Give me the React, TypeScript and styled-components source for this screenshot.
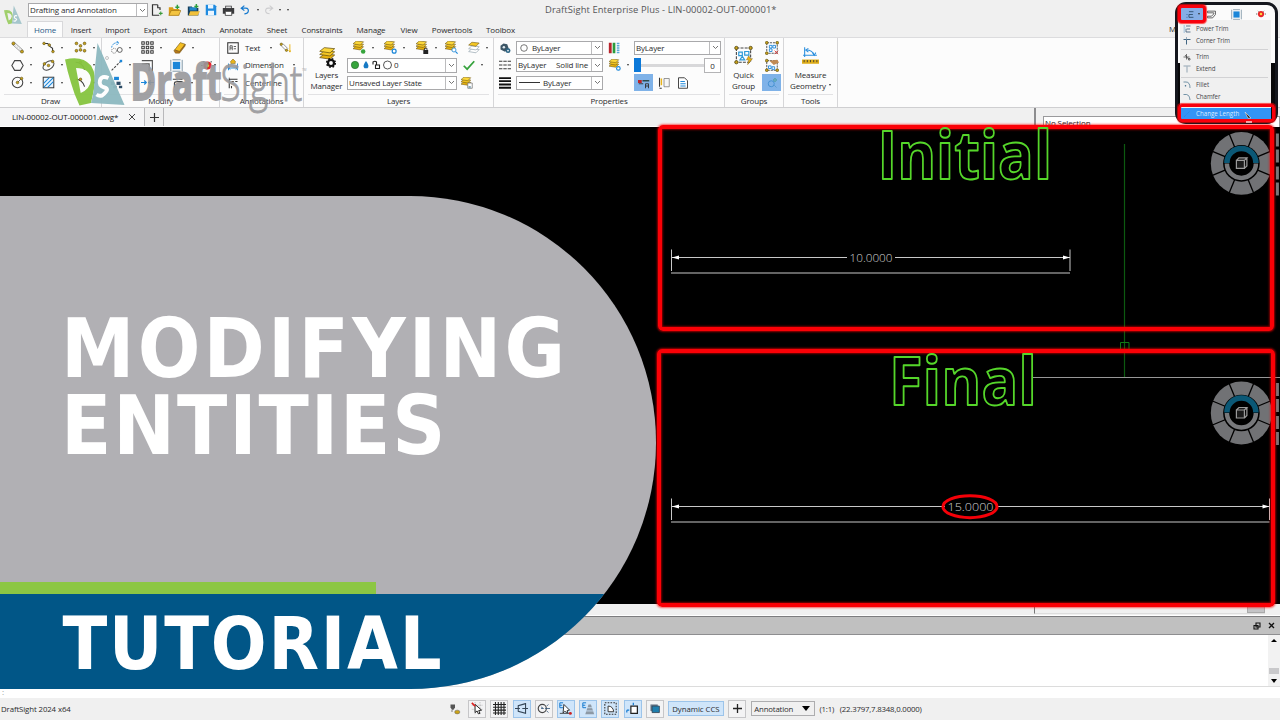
import React from "react";
import styled, { createGlobalStyle, css } from "styled-components";

const GlobalStyle = createGlobalStyle`
  * { box-sizing: border-box; }
  body { margin: 0; background: #f0f0f0; overflow: hidden; }
`;

const INK = "#2b2b2d";
const BLUE = "#1b86d8";
const GOLD = "#e8b41c";

/* ---------- shell ---------- */

const Shell = styled.div`
  position: relative;
  width: 1280px;
  height: 720px;
  overflow: hidden;
  display: flex;
  flex-direction: column;
  background: #f0f0f0;
  color: ${INK};
  font-family: "Open Sans", "Noto Sans", sans-serif;
  font-size: 8px;
  line-height: 10px;
  letter-spacing: -0.16px;
  white-space: nowrap;
`;

const TitleBar = styled.header`
  display: flex;
  align-items: center;
  height: 20px;
  flex: none;
  padding-left: 3px;
`;

const AppMark = styled.div`
  width: 25px;
  height: 20px;
  overflow: visible;
  svg { display: block; overflow: visible; }
`;

const QuickTools = styled.div`
  display: flex;
  align-items: center;
  width: 150px;
  gap: 5.3px;
  padding-left: 3px;
`;

const WindowTitle = styled.div`
  margin-left: 247px;
  color: #555558;
  font-size: 9.4px;
  letter-spacing: 0.09px;
`;

const Combo = styled.div<{ $w: number; $h?: number }>`
  display: flex;
  align-items: center;
  width: ${(p) => p.$w}px;
  height: ${(p) => p.$h ?? 14}px;
  flex: none;
  border: 1px solid #a9a9ab;
  background: #fff;
  padding-left: 1px;
`;

const ComboText = styled.span`
  flex: 1;
  display: flex;
  align-items: center;
  gap: 3px;
`;

const ComboButton = styled.span`
  width: 11px;
  align-self: stretch;
  display: flex;
  align-items: center;
  justify-content: center;
  border-left: 1px solid #bcbcbe;
`;

const Tabs = styled.nav`
  display: flex;
  height: 17px;
  flex: none;
  align-items: flex-end;
  padding-left: 27px;
`;

const Tab = styled.span<{ $w: number; $active?: boolean }>`
  width: ${(p) => p.$w}px;
  height: 16px;
  text-align: center;
  line-height: 17px;
  ${(p) =>
    p.$active &&
    css`
      background: #fcfcfc;
      border: 1px solid #d8d8da;
      border-bottom: 0;
      line-height: 15px;
      color: #2a5a86;
    `}
`;

const TabOverflow = styled.span`
  margin-left: auto;
  padding-right: 104px;
  line-height: 16px;
`;

/* ---------- ribbon ---------- */

const Ribbon = styled.section`
  display: flex;
  height: 71px;
  flex: none;
  background: #fcfcfc;
  border-top: 1px solid #dcdcde;
  border-bottom: 1px solid #cfcfd1;
`;

const Panel = styled.div<{ $w: number }>`
  width: ${(p) => p.$w}px;
  flex: none;
  display: flex;
  flex-direction: column;
  border-right: 1px solid #d6d6d8;
`;

const PanelBody = styled.div`
  flex: 1;
  display: flex;
  padding-top: 1px;
`;

const PanelName = styled.div`
  height: 13px;
  margin: 0 4px;
  border-top: 1px solid #e2e2e4;
  text-align: center;
  line-height: 12px;
`;

const Rows = styled.div<{ $w?: number }>`
  display: flex;
  flex-direction: column;
  width: ${(p) => (p.$w ? p.$w + "px" : "auto")};
`;

const Row = styled.div<{ $pad?: number }>`
  display: flex;
  align-items: center;
  height: 17.6px;
  padding-left: ${(p) => p.$pad ?? 0}px;
`;

const Cell = styled.span<{ $w: number; $center?: boolean }>`
  display: flex;
  align-items: center;
  width: ${(p) => p.$w}px;
  flex: none;
  justify-content: ${(p) => (p.$center ? "center" : "flex-start")};
`;

const Caret = styled.i<{ $gap?: number }>`
  width: 0;
  height: 0;
  flex: none;
  margin-left: ${(p) => p.$gap ?? 0}px;
  border: 1.8px solid transparent;
  border-top: 2.2px solid #333;
  border-bottom: 0;
`;

const BigTool = styled.div<{ $w: number; $pad?: number }>`
  width: ${(p) => p.$w}px;
  display: flex;
  flex-direction: column;
  align-items: center;
  padding-top: 2.5px;
  padding-left: ${(p) => p.$pad ?? 0}px;
  line-height: 11px;
`;

const BigLabel = styled.span`
  display: flex;
  align-items: center;
`;

const Pressed = styled.span<{ $w: number }>`
  width: ${(p) => p.$w}px;
  height: 17px;
  flex: none;
  display: flex;
  align-items: center;
  justify-content: center;
  background: #7fb2e8;
`;

const Slider = styled.span`
  width: 70px;
  height: 14px;
  display: flex;
  align-items: center;
  &::before { content: ""; width: 7px; height: 14px; background: #0b78d8; }
  &::after { content: ""; flex: 1; height: 3px; background: #d8d8da; }
`;

const ValueBox = styled.span`
  width: 17px;
  height: 15px;
  border: 1px solid #b4b4b6;
  background: #fff;
  text-align: center;
  line-height: 13px;
`;

const LineSample = styled.i`
  width: 21px;
  height: 1px;
  margin-left: 1px;
  background: #333;
`;

/* ---------- document strip ---------- */

const DocStrip = styled.div`
  display: flex;
  height: 19px;
  flex: none;
  border-bottom: 1px solid #fff;
`;

const DocTab = styled.div`
  width: 145px;
  display: flex;
  align-items: center;
  padding: 0 8px 1px 12px;
  justify-content: space-between;
  border-right: 1px solid #b8b8ba;
  background: #f6f6f7;
  letter-spacing: -0.1px;
  color: #111;
`;

const NewTab = styled.div`
  width: 19px;
  display: flex;
  align-items: center;
  justify-content: center;
  border-right: 1px solid #b8b8ba;
`;

const SideDock = styled.div`
  margin-left: auto;
  width: 246px;
  border-left: 2px solid #8c8c8e;
  padding: 8px 0 0 7px;
`;

const SelectionField = styled.div`
  height: 11px;
  border: 1px solid #9a9a9c;
  border-bottom: 0;
  background: #fff;
  color: #222;
  padding-left: 1px;
  line-height: 12px;
  letter-spacing: -0.1px;
`;

/* ---------- drawing area ---------- */

const Viewport = styled.main`
  position: relative;
  height: 477px;
  flex: none;
  background: #000;
`;

const Drawing = styled.svg`
  position: absolute;
  left: 640px;
  top: -7px;
  overflow: visible;
  font-family: "Open Sans", sans-serif;
  letter-spacing: 0;
`;

const Frame = styled.div<{ $x: number; $y: number; $w: number; $h: number }>`
  position: absolute;
  left: ${(p) => p.$x}px;
  top: ${(p) => p.$y}px;
  width: ${(p) => p.$w}px;
  height: ${(p) => p.$h}px;
  border: 4px solid #fb0006;
  border-radius: 5px;
  box-shadow: 0 0 2px 1px rgba(255, 0, 0, 0.6), inset 0 0 2px 1px rgba(255, 0, 0, 0.5);
`;

/* ---------- command window and status bar ---------- */

const DockEdge = styled.div`
  height: 12px;
  flex: none;
  display: flex;
  justify-content: flex-end;
  padding-right: 15px;
  border-bottom: 1px solid #fff;
`;

const DockField = styled.div`
  width: 231px;
  height: 10px;
  display: flex;
  justify-content: flex-end;
  border-left: 1px solid #777;
  border-bottom: 1px solid #ddd;
  &::after { content: ""; width: 16px; background: #c4c4c6; border: 1px solid #aaa; }
`;

const CommandBar = styled.div`
  height: 19px;
  flex: none;
  display: flex;
  align-items: center;
  justify-content: flex-end;
  gap: 7px;
  padding-right: 5px;
  background: #c0c0c0;
  border-top: 1px solid #7c7c7e;
  border-bottom: 1px solid #8e8e90;
`;

const CommandLog = styled.div`
  height: 52px;
  flex: none;
  display: flex;
  justify-content: flex-end;
  background: #fff;
  border-bottom: 1px solid #dcdcdc;
`;

const Scrollbar = styled.div`
  width: 12px;
  display: flex;
  flex-direction: column;
  align-items: center;
  background: #f2f2f2;
  padding: 4px 0 3px;
`;

const ArrowUp = styled.i`
  border: 3px solid transparent;
  border-bottom: 3.5px solid #000;
  border-top: 0;
`;

const ArrowDown = styled.i<{ $s?: number }>`
  border: ${(p) => p.$s ?? 3}px solid transparent;
  border-top: ${(p) => (p.$s ?? 3) + 1}px solid #000;
  border-bottom: 0;
`;

const Thumb = styled.i`
  width: 10px;
  height: 6px;
  margin: auto 0 5px;
  background: #c9c9cb;
`;

const CommandLine = styled.div`
  height: 11px;
  flex: none;
  background: #fff;
  padding-left: 2px;
  line-height: 9px;
  color: #999;
`;

const StatusBar = styled.footer`
  flex: 1;
  display: flex;
  align-items: center;
  padding: 0 0 1px 1px;
  font-size: 7.8px;
`;

const Product = styled.span`
  width: 445px;
  letter-spacing: -0.1px;
`;

const StatusTools = styled.div`
  display: flex;
  align-items: center;
  gap: 4.2px;
`;

const StatusButton = styled.span<{ $on?: boolean; $w?: number }>`
  width: ${(p) => p.$w ?? 18}px;
  height: 18px;
  display: flex;
  align-items: center;
  justify-content: center;
  border: 1px solid ${(p) => (p.$on ? "#9cc4ea" : "#c6c6c8")};
  background: ${(p) => (p.$on ? "#cfe5fa" : "#f3f3f4")};
`;

const StatusText = styled(StatusButton)`
  height: 15px;
  letter-spacing: -0.04px;
`;

const ScaleSelect = styled(StatusButton)`
  height: 15px;
  margin-left: 1px;
  justify-content: space-between;
  padding: 0 4px 0 2px;
  border-color: #adadaf;
  background: #f0f0f0;
`;

const Coordinates = styled.span<{ $w: number }>`
  width: ${(p) => p.$w}px;
  letter-spacing: -0.18px;
`;

/* ---------- banner ---------- */

const Banner = styled.section`
  position: absolute;
  left: 0;
  top: 196px;
  width: 656px;
  height: 493px;
  display: flex;
  flex-direction: column;
  overflow: hidden;
  border-radius: 0 246px 246px 0;
  background: #b1b0b4;
  color: #fff;
  font-family: "DejaVu Sans Condensed", "DejaVu Sans", sans-serif;
  font-stretch: condensed;
  font-weight: 700;
`;

const Headline = styled.h1`
  flex: 1;
  margin: 0;
  padding: 113.5px 0 0 61px;
  font-size: 82px;
  line-height: 77px;
  font-weight: 700;
`;

const HeadlineRow = styled.span<{ $tracking: number }>`
  display: block;
  letter-spacing: ${(p) => p.$tracking}px;
`;

const Accent = styled.div`
  width: 376px;
  height: 12px;
  background: #8cc643;
`;

const SeriesName = styled.div`
  height: 95px;
  background: #015687;
  padding-left: 62.5px;
  font-size: 73px;
  line-height: 99px;
`;

const BrandLogo = styled.svg`
  position: absolute;
  left: 60px;
  top: 38px;
  overflow: visible;
  letter-spacing: 0;
`;

/* ---------- trim menu callout ---------- */

const Callout = styled.aside`
  position: absolute;
  left: 1175px;
  top: 2px;
  width: 103px;
  height: 122px;
  border: 3px solid #14161d;
  border-radius: 11px;
  overflow: hidden;
  background: linear-gradient(#fbfbfb 58px, #08080a 58px);
  padding: 0 4px 0 2px;
  display: flex;
  flex-direction: column;
`;

const CalloutTools = styled.div`
  height: 15px;
  flex: none;
  display: flex;
  align-items: center;
  justify-content: space-between;
  padding: 3px 5px 0 27px;
`;

const Menu = styled.ul`
  margin: 0;
  padding: 3px 0 0;
  height: 98px;
  list-style: none;
  background: #f0f0f0;
  font-size: 6.2px;
  letter-spacing: -0.08px;
  color: #47474b;
`;

const MenuItem = styled.li<{ $hot?: boolean }>`
  height: 12px;
  display: flex;
  align-items: center;
  gap: 5px;
  padding-left: 3px;
  ${(p) =>
    p.$hot &&
    css`
      margin-top: 5px;
      background: #3394f5;
      color: #d9ecff;
      letter-spacing: 0;
    `}
`;

const MenuRule = styled.li`
  height: 1px;
  margin: 1.6px 3px 1.6px 1px;
  background: #d2d2d4;
`;

const RedOutline = styled.div<{ $x: number; $y: number; $w: number; $h: number }>`
  position: absolute;
  left: ${(p) => p.$x}px;
  top: ${(p) => p.$y}px;
  width: ${(p) => p.$w}px;
  height: ${(p) => p.$h}px;
  border: 3px solid #f8000c;
  border-radius: 4px;
  box-shadow: 0 0 1px 0.5px rgba(255, 0, 0, 0.7);
  display: flex;
  align-items: center;
  justify-content: center;
`;

const TrimButton = styled(RedOutline)`
  background: #86aee6;
  gap: 4px;
`;

const Pointer = styled.svg`
  position: absolute;
  left: 1244px;
  top: 111px;
`;

/* ---------- icons ---------- */

const dots = (pts: number[][], r = 1.6) =>
  pts.map(([x, y], i) => <circle key={i} cx={x} cy={y} r={r} fill="#c9a21a" stroke="#554a16" strokeWidth=".7" />);

const stack = (dx = 0, dy = 0) => (
  <g transform={`translate(${dx} ${dy})`} stroke="#6b5410" strokeWidth=".7">
    <path d="M1 10.5 5 7l9 1-4 4z" fill="#e7b10e" />
    <path d="M1 7.5 5 4l9 1-4 4z" fill="#f3c623" />
    <path d="M1 4.5 5 1l9 1-4 4z" fill="#fbd63a" />
  </g>
);

const art: Record<string, React.ReactNode> = {
  newDoc: <><path d="M9 1H2v14h9M9 1v4h3V8" fill="none" stroke="#333" strokeWidth="1.6" /><path d="M13 10v5M10.5 12.5h5" stroke="#3a9a3a" strokeWidth="1.4" /></>,
  open: <><path d="M1 14V4h5l1 2h7v8z" fill="#d99b16" /><path d="M1 14l3-6h12l-3 6z" fill="#f3c440" stroke="#86600b" strokeWidth=".6" /><path d="M9 4h5M11.5 1v5" stroke="#2f9e3c" strokeWidth="1.8" /></>,
  openBlue: <><path d="M1 14V3h5l1 2h7v9z" fill="#173f5c" /><path d="M2 14l2-5h12l-3 5z" fill="#f0c03a" /><path d="M3 4h9v4H3z" fill="#2287c9" /><path d="M9 3h5M11.5 0v5" stroke="#2f9e3c" strokeWidth="1.8" /></>,
  save: <><path d="M1 1h12l2 2v12H1z" fill="#1f8be0" /><path d="M4 1h7v5H4zM4 9h8v6H4z" fill="#eaf5ff" /></>,
  print: <><path d="M4 2h8v4H4zM1 5h14v7H1z" fill="#3a3a3c" /><path d="M4 9h8v5H4z" fill="#fff" stroke="#333" /><path d="M5 3h6v2H5z" fill="#ddd" /></>,
  undo: <path d="M7 1 2 5l5 4M2 5h7c4 0 5 3 4 6s-4 3-6 3" fill="none" stroke="#1479cf" strokeWidth="2" />,
  redo: <path d="M9 1l5 4-5 4M14 5H7C3 5 2 8 3 11s4 3 6 3" fill="none" stroke="#cdcdcf" strokeWidth="1.8" />,
  line: <><path d="M2 4.5l10 9M4.5 2l10 9" stroke="#888" strokeWidth="1" /><path d="M3 3l11 10" stroke="#bbb" strokeDasharray="2 1" />{dots([[3, 3], [13.5, 13]], 1.9)}</>,
  polyline: <><path d="M2 3h5l3 4 3 2v4" fill="none" stroke="#333" strokeWidth="1.3" />{dots([[2.5, 3], [9, 5], [13.5, 13]])}</>,
  points: dots([[3, 3], [8, 6], [13, 3], [3, 12], [8, 11], [13, 12]], 1.7),
  hex: <path d="M4.5 2h7L15 8l-3.5 6h-7L1 8z" fill="none" stroke="#444" strokeWidth="1.3" />,
  ellipse: <><ellipse cx="8" cy="8" rx="7.5" ry="4.8" transform="rotate(-35 8 8)" fill="none" stroke="#444" strokeWidth="1.2" />{dots([[8, 8], [13, 3], [3, 6]])}</>,
  arc: <><path d="M2 4q8 0 11 9" fill="none" stroke="#333" strokeWidth="1.4" />{dots([[8, 4]])}</>,
  circle: <><circle cx="8" cy="8" r="6.5" fill="none" stroke="#444" strokeWidth="1.3" /><path d="M8 8l5-5" stroke="#444" />{dots([[8, 8], [13, 3]])}</>,
  hatch: <><rect x="1.5" y="1.5" width="13" height="13" fill="#eaf5ff" stroke="#333" strokeWidth="1.2" /><path d="M2 9l7-7M2 14L14 2M7 14l7-7" stroke={BLUE} strokeWidth="1.3" /></>,
  rotate: <><path d="M2 8q1-6 8-6M8 0l3 2-3 3" fill="none" stroke={BLUE} strokeWidth="1.2" strokeDasharray="2 1" /><circle cx="5" cy="12" r="3" fill="none" stroke="#666" strokeDasharray="1.5 1" /><circle cx="12" cy="11" r="3" fill="none" stroke="#444" /></>,
  pattern: <g fill="none" stroke="#333" strokeWidth="1.2">{[1, 6.5, 12].map((y) => [1, 6.5, 12].map((x) => <rect key={`${x}-${y}`} x={x} y={y} width="3" height="3" />))}</g>,
  erase: <><path d="M2 11l7-9 6 2-7 9z" fill="#f5bf22" stroke="#7a5a08" strokeWidth=".8" /><path d="M1 12l1-1 6 2 7-9v2l-7 9H3z" fill="#b97a1c" stroke="#5c430a" strokeWidth=".5" /></>,
  extend: <><path d="M2 14L14 2" stroke="#444" strokeDasharray="3 1.5" strokeWidth="1.3" /><path d="M12 1h3v3h-3z" fill={BLUE} /></>,
  offset: <path d="M1 2h13v13M1 6h9v9" fill="none" stroke="#555" strokeWidth="1.4" />,
  stretch: <><rect x="3.5" y="3.5" width="9" height="9" fill={BLUE} /><path d="M3 1h10M3 15h10M1 1v14M15 1v14" stroke="#7d95a6" strokeWidth="1.2" /></>,
  explode: <><circle cx="8" cy="8" r="5" fill="#e8262a" /><path d="M0 8h2M14 8h2M4 4l-1-1M12 4l1-1" stroke="#555" strokeWidth="1.4" /><circle cx="8" cy="8" r="2" fill="#ffd23e" /></>,
  array: <g fill="#2c4c66"><rect x="5" y="1" width="6" height="4" fill={BLUE} /><rect x="1" y="7" width="4" height="4" /><rect x="8" y="7" width="5" height="4" /><rect x="4" y="12" width="4" height="3" /><rect x="11" y="12" width="4" height="3" /></g>,
  split: <path d="M0 8h6M4 5.5L6.5 8 4 10.5M16 8h-6M12 5.5L9.5 8l2.5 2.5" fill="none" stroke={BLUE} strokeWidth="1.5" />,
  chamfer: <path d="M1 4h12M3 14V9q0-2 4-2h6" fill="none" stroke="#444" strokeWidth="1.4" />,
  note: <><rect x="1" y="1" width="14" height="14" fill="none" stroke="#333" strokeWidth="1.4" /><path d="M4 11V5h3v6M4 8h3M9 6h3M9 9h3" stroke="#333" fill="none" /></>,
  leader: <><path d="M2 4l8 8M5 2l7 7" stroke="#777" /><path d="M14.5 3v10M13 11l1.5 2.5L16 11" stroke={GOLD} fill="none" strokeWidth="1.3" />{dots([[3, 3], [10, 11]])}</>,
  dimension: <><path d="M2 6v9M14 6v9M2 12h12M4.5 10L2 12l2.5 2M11.5 10l2.5 2-2.5 2" fill="none" stroke={BLUE} strokeWidth="1.2" /><path d="M5 6V3l3-3 3 3v3z" fill={GOLD} stroke="#6b5410" strokeWidth=".6" /></>,
  centerline: <path d="M3 15V3h11M6 15v-3M6 6h3M11 6h3M3 1v1" fill="none" stroke="#333" strokeWidth="1.4" />,
  layers: stack(0.5, 1.5),
  layerGreen: <>{stack(-1, -1)}<circle cx="12.5" cy="13" r="2.8" fill="#36a43c" /></>,
  layerRing: <>{stack(-1, -1)}<circle cx="12.5" cy="12.5" r="2.4" fill="#fff" stroke={BLUE} strokeWidth="1.5" /></>,
  layerLock: <>{stack(-1, -1)}<path d="M9 11h6v5H9z" fill="#222" /><path d="M10.5 11V9h3v2" fill="none" stroke="#222" /></>,
  layerFind: <>{stack(-1, -1)}<circle cx="11" cy="11" r="2.5" fill="#fff" stroke={BLUE} /><path d="M13 13l2.5 2.5" stroke={BLUE} strokeWidth="1.4" /></>,
  layerPage: <>{stack(-1, -1)}<path d="M9 8h6v7H9z" fill="#fff" stroke="#777" /><path d="M10 12h3v3h-3z" fill="#8ab" /></>,
  layerGhost: <><g stroke="#9aa9b2" strokeWidth=".9" fill="#fff"><path d="M2 13l4-3.5 9 1L11 14.5z" /><path d="M2 9.5L6 6l9 1-4 4z" /></g><path d="M2 5l4-3.5 9 1L11 6.5z" fill="#f3c623" stroke="#6b5410" strokeWidth=".7" /></>,
  check: <path d="M1 9l4.5 4.5L15 3" fill="none" stroke="#35a23c" strokeWidth="2.3" />,
  gears: <g fill="#3d5666"><path d="M6 2l5 1 2 6-5 4-6-3 0-5z" /><circle cx="6.5" cy="7" r="1.7" fill="#dde8ee" /><circle cx="12" cy="11.5" r="3.3" fill="#2e6686" /><circle cx="12" cy="11.5" r="1.1" fill="#fff" /></g>,
  linetypes: <path d="M0 3h16M0 8h16M0 13h16" stroke="#333" strokeWidth="1.3" strokeDasharray="4.5 1.3" />,
  weights: <path d="M0 1.5h16M0 5.5h16M0 10h16M0 14.3h16" stroke="#111" strokeWidth="2.5" />,
  bars: <><path d="M3 1v14" stroke="#b8242c" strokeWidth="3.8" /><path d="M8 1v14" stroke="#2c9b3c" strokeWidth="3.6" /><path d="M13.5 1v14" stroke="#58a9d8" strokeWidth="3.5" strokeDasharray="2 1" /></>,
  match: <><path d="M0 4h5v4H0z" fill="#b8242c" /><path d="M6 4h9v2H6z" fill="#2c4a4c" /><path d="M1 9h6M10 15V9h4v6M10 12h4" fill="none" stroke="#333" strokeWidth="1.2" /></>,
  brush: <><path d="M2 1v12M2 15h3" stroke="#333" strokeWidth="1.4" /><path d="M4.5 2v9" stroke={GOLD} strokeWidth="2" /><path d="M8 2h7v11H8z" fill="#f6f6f6" stroke="#777" /></>,
  sheet: <><path d="M2 1h8l4 4v10H2z" fill="#fff" stroke="#333" strokeWidth="1.2" /><path d="M4.5 6h6M4.5 9h7M4.5 12h7" stroke={BLUE} strokeWidth="1.3" /></>,
  group: <><path d="M2 2h12v12H2z" fill="none" stroke="#444" strokeDasharray="2.5 1" strokeWidth=".9" />{dots([[2, 2], [14, 2], [2, 14]], 1.4)}<path d="M4 5.5h3v3H4zM9 5h3.5v3H9z" fill="none" stroke="#2f9bd8" /><path d="M5 12l2-3 2 3z" fill="none" stroke="#2f9bd8" /><path d="M12.5 8.5L10.5 12h2l-1 4 4-5h-2z" fill="#f0b70f" stroke="#7a5a08" strokeWidth=".4" /></>,
  ungroup: <><path d="M2 2h12v12H2z" fill="none" stroke="#444" strokeDasharray="2.5 1" />{dots([[2, 2], [14, 2], [2, 14]])}<path d="M5 5h3v3H5zM9 5h3v3H9zM5 9h3v3H5z" fill="none" stroke={BLUE} /><path d="M11 11l4 4M15 11l-4 4" stroke="#d33" /></>,
  groupEdit: <><path d="M2 3h12v11H2z" fill="none" stroke="#444" strokeDasharray="2.5 1" />{dots([[2, 3], [2, 14], [14, 14]])}<path d="M4 9h3v3H4zM8 10h3v3H8z" fill="none" stroke={BLUE} /><path d="M5 3l9-1 2 3-6 3z" fill="#c08a54" /></>,
  sparkle: <><circle cx="7" cy="9" r="4" fill="none" stroke="#3f8fd0" strokeWidth="1.2" /><circle cx="12" cy="4" r="1.8" fill="none" stroke="#3f9a8d" /><path d="M11 11l3 3" stroke="#4f93c8" /></>,
  measure: <><path d="M2.5 0v9M1 7.5h13M4 2.5q6 0 7.5 5" fill="none" stroke="#2b8fdd" strokeWidth="1" /><path d="M6 1L3.5 2.5 6 4.5M10 5l1.5 2.5L13 5" fill="none" stroke="#2b8fdd" /><path d="M0 11.5h16v4H0z" fill="#dfae1a" /><path d="M2 12v2M5 12v2M8 12v2M11 12v2M14 12v2" stroke="#333" strokeWidth=".8" /></>,
  plug: <><path d="M2 2h6v4L6 9H4L2 6z" fill="#555" /><path d="M4 9v3" stroke="#555" /><ellipse cx="11" cy="12" rx="3.5" ry="2.5" fill="#c9a21a" stroke="#555" strokeWidth=".6" /></>,
  snap: <><path d="M1 4h14M1 9h14M5 0v15M11 0v15" stroke="#aaa" strokeDasharray="1 1" /><path d="M5 3l8 7-3.5.5L11 14l-2 .5L7.5 11 5 13z" fill="#fff" stroke="#222" strokeWidth="1.2" /><path d="M1 1l4 4" stroke="#d22" strokeWidth="2" /></>,
  grid: <path d="M3 0v16M6.5 0v16M10 0v16M13.5 0v16M0 3h16M0 6.5h16M0 10h16M0 13.5h16" stroke="#222" strokeWidth="1.3" />,
  ortho: <path d="M13 2L4 4.5v7L13 14zM0 8h6M9 8h7" fill="none" stroke="#345" strokeWidth="1.3" />,
  polar: <><circle cx="6.5" cy="8" r="5" fill="none" stroke="#444" strokeWidth="1.4" /><path d="M5 6l3 2H5M10 8h6M12 5l2-2M12 11l2 2" stroke="#357" fill="none" /></>,
  esnap: <><path d="M1 1v6M1 1h4M1 4h3M1 7h4" stroke="#1479cf" strokeWidth="1.2" fill="none" /><path d="M6 3l7 7-3 .5 1 3-4-2-2 2z" fill="#fff" stroke="#333" strokeWidth="1.2" /><path d="M1 14h13" stroke="#333" /><circle cx="14" cy="14" r="1.8" fill="#c22" /></>,
  etrack: <><path d="M1 1v6M1 1h4M1 4h3M1 7h4" stroke="#1479cf" strokeWidth="1.2" fill="none" /><path d="M8 3h3l4 12H4z" fill="#8d99a5" /><path d="M6 7h7M5 11h9" stroke="#cfe5fa" /></>,
  entities: <><rect x="1" y="1" width="14" height="14" fill="none" stroke="#333" strokeDasharray="2 1.5" strokeWidth="1.3" /><path d="M5 12V5q6 0 7 7z" fill="#fff" stroke="#333" strokeWidth="1.2" /></>,
  square: <><path d="M6 5h8v9H6z" fill="#fff" stroke="#222" strokeWidth="1.5" /><path d="M9 1v3M1 10h3M1 10v3" stroke="#1479cf" strokeWidth="1.5" /></>,
  cubes: <><path d="M3 3h9v8H3z" fill="#678" /><path d="M5 5h9v8H5z" fill="#1f7fae" stroke="#345" /></>,
  trim: <><path d="M7 3h8M7 8h7M7 13h8M7 8v5" fill="none" stroke="#2e4f6e" strokeWidth="1.6" /><path d="M2 8h3M2 13h3" stroke="#4a78b4" strokeWidth="1.3" /></>,
  trimMenu: <><path d="M6 2h9M7 8h7M6 14h9M6 8v6" fill="none" stroke="#2e4f6e" strokeWidth="1.5" /><path d="M1 2h3M1 6h4M1 10h3M1 14h3" stroke="#4a8fc4" strokeWidth="1.3" /></>,
  corner: <path d="M1 5h5M7 15V5h8M7 1v2" fill="none" stroke="#2c5575" strokeWidth="1.8" />,
  trimCross: <path d="M1 8h12M7 2v11M4 4l7 8M11 11h3v3h-3z" fill="none" stroke="#444" strokeWidth="1.5" />,
  extendT: <path d="M1 2h14M8 3v12" fill="none" stroke="#6a8598" strokeWidth="1.4" />,
  fillet: <path d="M1 2h5q8 0 8 12M5 8v3M3.5 9.5h3" fill="none" stroke="#3c6a86" strokeWidth="1.4" />,
  chamferSmall: <path d="M1 3h6q6 1 7 11" fill="none" stroke="#3c6a86" strokeWidth="1.4" />,
  lengthen: <path d="M2 14L14 2" stroke="#2a7ad4" strokeWidth="1.2" strokeDasharray="2 2" />,
  fold: <path d="M1 2h14v6l-5 6H1v-3h7l4-4V5H1z" fill="none" stroke="#333" strokeWidth="1.3" />,
};

const Icon = ({ name, size = 12 }: { name: string; size?: number }) => (
  <svg width={size} height={size} viewBox="0 0 16 16">
    {art[name]}
  </svg>
);

const Chevron = () => (
  <svg width="7" height="5" viewBox="0 0 7 5">
    <path d="M1 1l2.5 2.5L6 1" fill="none" stroke="#666" strokeWidth=".9" />
  </svg>
);

const Select = ({ w, h, children }: { w: number; h?: number; children: React.ReactNode }) => (
  <Combo $w={w} $h={h}>
    <ComboText>{children}</ComboText>
    <ComboButton><Chevron /></ComboButton>
  </Combo>
);

const Tool = ({ name, w = 31.3, caret = true, gap = 6 }: { name: string; w?: number; caret?: boolean; gap?: number }) => (
  <Cell $w={w}>
    <Icon name={name} size={13} />
    {caret && <Caret $gap={gap} />}
  </Cell>
);

/* ---------- ribbon panels ---------- */

const DrawPanel = () => (
  <Panel $w={102}>
    <PanelBody>
      <Rows>
        {[["line", "polyline", "points"], ["hex", "ellipse", "arc"], ["circle", "hatch", "arc"]].map((r, i) => (
          <Row key={i} $pad={11}>{r.map((n, j) => <Tool key={j} name={n} w={j === 2 ? 24 : 31.3} />)}</Row>
        ))}
      </Rows>
    </PanelBody>
    <PanelName>Draw</PanelName>
  </Panel>
);

const ModifyPanel = () => (
  <Panel $w={118}>
    <PanelBody>
      <Rows>
        <Row $pad={8}><Tool name="rotate" /><Tool name="pattern" /><Tool name="erase" /></Row>
        <Row $pad={8}><Tool name="extend" /><Tool name="offset" w={29} caret={false} /><Tool name="stretch" w={31} caret={false} /><Tool name="explode" w={18} gap={0} /></Row>
        <Row $pad={8}><Tool name="array" /><Tool name="split" w={31} caret={false} /><Tool name="chamfer" /></Row>
      </Rows>
    </PanelBody>
    <PanelName>Modify</PanelName>
  </Panel>
);

const AnnotationsPanel = () => (
  <Panel $w={84}>
    <PanelBody>
      <Rows>
        <Row $pad={7}><Cell $w={18}><Icon name="note" /></Cell><Cell $w={25}>Text</Cell><Caret /><Cell $w={25} $center><Icon name="leader" /></Cell></Row>
        <Row $pad={7}><Cell $w={18}><Icon name="dimension" /></Cell><Cell $w={48}>Dimension</Cell><Caret /></Row>
        <Row $pad={7}><Cell $w={18}><Icon name="centerline" /></Cell>Centerline</Row>
      </Rows>
    </PanelBody>
    <PanelName>Annotations</PanelName>
  </Panel>
);

const LayersPanel = () => (
  <Panel $w={190}>
    <PanelBody>
      <BigTool $w={43} $pad={2}>
        <svg width="18" height="27" viewBox="0 0 18 27">
          <g transform="translate(0 3) scale(1.15 1.05)">{art.layers}</g>
          <circle cx="13" cy="21" r="3" fill="none" stroke="#111" strokeWidth="2.2" />
          <circle cx="13" cy="21" r="4.3" fill="none" stroke="#111" strokeWidth="1.6" strokeDasharray="1.7 1.7" />
        </svg>
        <BigLabel>Layers</BigLabel>
        <BigLabel>Manager</BigLabel>
      </BigTool>
      <Rows>
        <Row $pad={6}>
          <Tool name="layerGreen" /><Tool name="layerRing" /><Tool name="layerLock" w={29} />
          <Tool name="layerFind" w={22} caret={false} /><Tool name="layerGhost" w={24} />
        </Row>
        <Row>
          <Select w={110} h={15}>
            <svg width="46" height="10" viewBox="0 0 46 10">
              <circle cx="6" cy="5" r="3.7" fill="#36a43c" stroke="#27652b" strokeWidth=".6" />
              <path d="M17 1q4 5 1.5 7.3h-3Q13 6 17 1z" fill="#1679c4" />
              <path d="M26.500 5h4v3.500h-4zM24 4.500V2q2-1.500 3.500 0v3" fill="none" stroke="#222" strokeWidth="1.1" />
              <circle cx="38.5" cy="5" r="4" fill="#fff" stroke="#444" strokeWidth=".9" />
            </svg>
            <LayerName>0</LayerName>
          </Select>
          <Cell $w={24} $center><Icon name="check" /></Cell><Caret />
        </Row>
        <Row>
          <Select w={110}>Unsaved Layer State</Select>
          <Cell $w={20} $center><Icon name="layerPage" /></Cell>
        </Row>
      </Rows>
    </PanelBody>
    <PanelName>Layers</PanelName>
  </Panel>
);

const LayerName = styled.span`
  margin-left: -4px;
`;

const PropertiesPanel = () => (
  <Panel $w={231}>
    <PanelBody>
      <Rows $w={140}>
        <Row $pad={5}>
          <Cell $w={17}><Icon name="gears" /></Cell>
          <Select w={87}>
            <svg width="11" height="8" viewBox="0 0 11 8"><circle cx="6" cy="4" r="3.3" fill="none" stroke="#555" strokeWidth=".8" /></svg>
            ByLayer
          </Select>
          <Cell $w={22} $center><Icon name="bars" /></Cell>
        </Row>
        <Row $pad={5}>
          <Cell $w={17}><Icon name="linetypes" /></Cell>
          <Select w={87}><Cell $w={35}>ByLayer</Cell>Solid line</Select>
          <Cell $w={24} $center><Icon name="layerRing" /></Cell><Caret />
        </Row>
        <Row $pad={5}>
          <Cell $w={17}><Icon name="weights" /></Cell>
          <Select w={87}><LineSample />ByLayer</Select>
        </Row>
      </Rows>
      <Rows>
        <Row><Select w={87}>ByLayer</Select></Row>
        <Row><Slider /><ValueBox>0</ValueBox></Row>
        <Row>
          <Pressed $w={19}><Icon name="match" /></Pressed>
          <Cell $w={21} $center><Icon name="brush" /></Cell>
          <Cell $w={18} $center><Icon name="sheet" /></Cell>
        </Row>
      </Rows>
    </PanelBody>
    <PanelName>Properties</PanelName>
  </Panel>
);

const GroupsPanel = () => (
  <Panel $w={59}>
    <PanelBody>
      <BigTool $w={37}>
        <svg width="19" height="27" viewBox="0 0 16 22.7"><g transform="translate(0 3)">{art.group}</g></svg>
        <BigLabel>Quick</BigLabel>
        <BigLabel>Group</BigLabel>
      </BigTool>
      <Rows>
        <Row><Cell $w={19} $center><Icon name="ungroup" size={14} /></Cell></Row>
        <Row><Cell $w={19} $center><Icon name="groupEdit" size={14} /></Cell></Row>
        <Row><Pressed $w={19}><Icon name="sparkle" /></Pressed></Row>
      </Rows>
    </PanelBody>
    <PanelName>Groups</PanelName>
  </Panel>
);

const ToolsPanel = () => (
  <Panel $w={54}>
    <PanelBody>
      <BigTool $w={54}>
        <svg width="17" height="27" viewBox="0 0 16 25.4"><g transform="translate(0 5)">{art.measure}</g></svg>
        <BigLabel>Measure</BigLabel>
        <BigLabel>Geometry<Caret $gap={3} /></BigLabel>
      </BigTool>
    </PanelBody>
    <PanelName>Tools</PanelName>
  </Panel>
);

/* ---------- drawing pieces ---------- */

const Wheel = ({ y }: { y: number }) => (
  <g transform={`translate(1241.4 ${y})`}>
    <ellipse rx="30.6" ry="31.4" fill="#717275" />
    {[22.5, 67.5, 112.5, 157.5].map((a) => (
      <path key={a} d="M0-32V32" stroke="#000" strokeWidth="1.3" transform={`rotate(${a})`} />
    ))}
    <circle r="18.3" fill="#000" />
    <path d="M-14.5 0a14.5 14.5 0 0 0 29 0" fill="none" stroke="#77787b" strokeWidth="4.5" />
    <path d="M-14.5-.5a14.5 14.5 0 0 1 29 0" fill="none" stroke="#0b5876" strokeWidth="5.5" />
    <path d="M-5-3h8v8h-8zM-5-3l2.500-2.500h8L3-3M5.500-5.500v8L3 5" fill="#1b1b1b" stroke="#9a9a9a" strokeWidth="1.2" />
    <path d="M36-30v13M36-14v13M36 3v13M36 19v13" stroke="#77787b" strokeWidth="3" />
  </g>
);

const Dimension = ({ x2, y, gap, children }: { x2: number; y: number; gap: [number, number]; children: string }) => (
  <g stroke="#c8c8c8" strokeWidth="1">
    <path d={`M671.5 ${y - 8}v21.5M${x2} ${y - 8}v21.5M672 ${y}H${gap[0]}M${gap[1]} ${y}H${x2}M671 ${y + 15.5}H${x2}`} fill="none" />
    <path d={`M672 ${y}l7-2v4zM${x2} ${y}l-7-2v4z`} fill="#fff" stroke="none" />
    <text x={gap[0] + 2.5} y={y + 4} textLength={gap[1] - gap[0] - 5} lengthAdjust="spacingAndGlyphs" fontSize="11" fontFamily="Open Sans" fontWeight="300" fill="#d0d0d0" stroke="none">{children}</text>
  </g>
);

const statusIcons: [string, boolean][] = [
  ["snap", false], ["grid", false], ["ortho", true], ["polar", false], ["esnap", true],
  ["etrack", true], ["entities", true], ["square", true], ["cubes", false],
];

const tabs: [string, number][] = [
  ["Insert", 36], ["Import", 37], ["Export", 39], ["Attach", 37], ["Annotate", 48], ["Sheet", 34],
  ["Constraints", 56], ["Manage", 42], ["View", 34], ["Powertools", 52], ["Toolbox", 45],
];

const Mark = () => (
  <>
    <path fillRule="evenodd" d="M65 59.500Q82 55 91 65.500Q97 75 94 89L91 103L79.500 105.500Q74 94 71 83Q67 70 65 59.500zM76 68L80.700 93Q90 89 91 80Q90 68 76 68z" fill="#86c53f" />
    <path d="M97.500 43L124.500 105L91 103Q95 90 94.500 72z" fill="#8db9c0" />
    <path d="M108.500 78q-7-3-8.500 2.500t4.500 7-2.500 8q-3 .8-5.500-1" fill="none" stroke="#fff" strokeWidth="4" />
  </>
);

export default function App() {
  return (
    <Shell>
      <GlobalStyle />
      <TitleBar>
        <AppMark>
          <svg width="20" height="20" viewBox="0 0 20 20">
            <g transform="translate(-18.5 -7.5) scale(.3)" opacity=".75"><Mark /></g>
          </svg>
        </AppMark>
        <Select w={120} h={14}>Drafting and Annotation</Select>
        <QuickTools>
          <Icon name="newDoc" size={12} /><Icon name="open" size={13} /><Icon name="openBlue" size={13} />
          <Icon name="save" size={12} /><Icon name="print" size={13} /><Icon name="undo" size={10} /><Caret $gap={1} />
          <Icon name="redo" size={10} /><Caret /><Caret />
        </QuickTools>
        <WindowTitle>DraftSight Enterprise Plus - LIN-00002-OUT-000001*</WindowTitle>
      </TitleBar>
      <Tabs>
        <Tab $w={36} $active>Home</Tab>
        {tabs.map(([t, w]) => <Tab key={t} $w={w}>{t}</Tab>)}
        <TabOverflow>M</TabOverflow>
      </Tabs>
      <Ribbon>
        <DrawPanel /><ModifyPanel /><AnnotationsPanel /><LayersPanel />
        <PropertiesPanel /><GroupsPanel /><ToolsPanel />
      </Ribbon>
      <DocStrip>
        <DocTab>
          LIN-00002-OUT-000001.dwg*
          <svg width="8" height="8" viewBox="0 0 8 8"><path d="M1 1l6 6M7 1L1 7" stroke="#333" strokeWidth=".9" /></svg>
        </DocTab>
        <NewTab><svg width="9" height="9" viewBox="0 0 9 9"><path d="M4.5 0v9M0 4.5h9" stroke="#333" strokeWidth="1.2" /></svg></NewTab>
        <SideDock><SelectionField>No Selection</SelectionField></SideDock>
      </DocStrip>

      <Viewport>
        <Drawing width="640" height="492" viewBox="640 120 640 492">
          <path d="M1124.5 144V377" stroke="#0c5a10" strokeWidth="1.2" />
          <path d="M1120.5 350v-7.5h8.5v7.5" fill="none" stroke="#0f7a14" />
          <path d="M1033 377.5H1280" stroke="#a8a8a8" strokeWidth=".9" />
          <Wheel y={163.4} />
          <Wheel y={413} />
          <Dimension x2={1070} y={257.5} gap={[847, 895]}>10.0000</Dimension>
          <Dimension x2={1269.5} y={506.5} gap={[945, 996]}>15.0000</Dimension>
          <ellipse cx="970" cy="506.7" rx="27" ry="11" fill="none" stroke="#f50008" strokeWidth="3" />
        </Drawing>
        <Frame $x={658} $y={-2} $w={616} $h={206} />
        <Frame $x={657} $y={222} $w={618} $h={258} />
        <Drawing width="640" height="492" viewBox="640 120 640 492">
          <g fill="#000" fillOpacity=".01" stroke="#55d62a" strokeWidth="1.9" strokeLinejoin="round" fontSize="66" fontWeight="700">
            <text x="877.5" y="178.5" textLength="174.5" lengthAdjust="spacingAndGlyphs">Initial</text>
            <text x="889" y="405" textLength="148" lengthAdjust="spacingAndGlyphs">Final</text>
          </g>
        </Drawing>
      </Viewport>

      <DockEdge><DockField /></DockEdge>
      <CommandBar>
        <svg width="8" height="8" viewBox="0 0 8 8"><path d="M3 1h4v4H3zM1 3.5h4v3.5H1z" fill="#c0c0c0" stroke="#111" strokeWidth="1.1" /></svg>
        <svg width="7" height="7" viewBox="0 0 7 7"><path d="M1 1l5 5M6 1L1 6" stroke="#111" strokeWidth="1.3" /></svg>
      </CommandBar>
      <CommandLog><Scrollbar><ArrowUp /><Thumb /><ArrowDown /></Scrollbar></CommandLog>
      <CommandLine>:</CommandLine>
      <StatusBar>
        <Product>DraftSight 2024 x64</Product>
        <StatusTools>
          <Cell $w={18} $center><Icon name="plug" /></Cell>
          {statusIcons.map(([n, on]) => <StatusButton key={n} $on={on}><Icon name={n} size={13} /></StatusButton>)}
          <StatusText $on $w={56}>Dynamic CCS</StatusText>
          <StatusButton><svg width="9" height="9" viewBox="0 0 9 9"><path d="M4.5 0v9M0 4.5h9" stroke="#222" strokeWidth="1.3" /></svg></StatusButton>
          <ScaleSelect $w={64}>Annotation<ArrowDown $s={4} /></ScaleSelect>
          <Coordinates $w={16}>(1:1)</Coordinates>
          <Coordinates $w={84}>(22.3797,7.8348,0.0000)</Coordinates>
        </StatusTools>
      </StatusBar>

      <BrandLogo width="250" height="80" viewBox="60 38 250 80">
        <g opacity=".95"><Mark /></g>
        <circle cx="107" cy="58" r="1.5" fill="none" stroke="#aaa" strokeWidth=".7" />
        <g fill="#98989b" stroke="#98989b" opacity=".9" fontFamily="Open Sans" fontSize="50">
          <text x="130.5" y="100.3" textLength="91" lengthAdjust="spacingAndGlyphs" fontWeight="700" strokeWidth="1.8">Draft</text>
          <text x="220.5" y="100.5" textLength="82" lengthAdjust="spacingAndGlyphs" fontWeight="300" strokeWidth=".9">Sight</text>
          <text x="302" y="71" fontSize="3" stroke="none">TM</text>
        </g>
      </BrandLogo>

      <Banner>
        <Headline>
          <HeadlineRow $tracking={3.2}>MODIFYING</HeadlineRow>
          <HeadlineRow $tracking={1.9}>ENTITIES</HeadlineRow>
        </Headline>
        <Accent />
        <SeriesName><HeadlineRow $tracking={1.8}>TUTORIAL</HeadlineRow></SeriesName>
      </Banner>

      <Callout>
        <CalloutTools><Icon name="fold" size={9} /><Icon name="stretch" size={11} /><Icon name="explode" size={10} /></CalloutTools>
        <Menu>
          <MenuItem><Icon name="trimMenu" size={8} />Power Trim</MenuItem>
          <MenuItem><Icon name="corner" size={8} />Corner Trim</MenuItem>
          <MenuRule />
          <MenuItem><Icon name="trimCross" size={8} />Trim</MenuItem>
          <MenuItem><Icon name="extendT" size={8} />Extend</MenuItem>
          <MenuRule />
          <MenuItem><Icon name="fillet" size={8} />Fillet</MenuItem>
          <MenuItem><Icon name="chamferSmall" size={8} />Chamfer</MenuItem>
          <MenuItem $hot><Icon name="lengthen" size={8} />Change Length</MenuItem>
        </Menu>
      </Callout>
      <TrimButton $x={1178} $y={5} $w={28} $h={18}><Icon name="trim" size={9} /><Caret /></TrimButton>
      <RedOutline $x={1178} $y={104} $w={97} $h={18} />
      <Pointer width="10" height="12" viewBox="0 0 10 12">
        <path d="M1 1l6 6-3 .3z" fill="#222" stroke="#eee" strokeWidth=".6" />
        <path d="M2 11h6" stroke="#ffd6d6" strokeWidth="1.5" />
      </Pointer>
    </Shell>
  );
}
